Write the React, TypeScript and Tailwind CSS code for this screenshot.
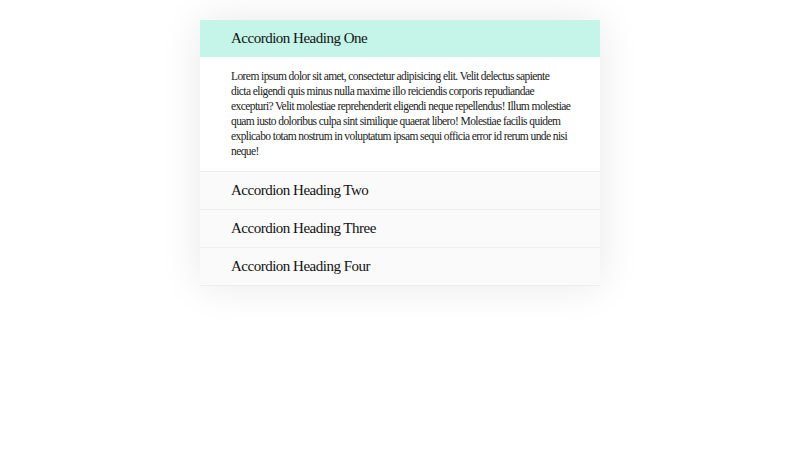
const items = [
  "Accordion Heading One",
  "Accordion Heading Two",
  "Accordion Heading Three",
  "Accordion Heading Four",
];

const bodyLines = [
  "Lorem ipsum dolor sit amet, consectetur adipisicing elit. Velit delectus sapiente",
  "dicta eligendi quis minus nulla maxime illo reiciendis corporis repudiandae",
  "excepturi? Velit molestiae reprehenderit eligendi neque repellendus! Illum molestiae",
  "quam iusto doloribus culpa sint similique quaerat libero! Molestiae facilis quidem",
  "explicabo totam nostrum in voluptatum ipsam sequi officia error id rerum unde nisi",
  "neque!",
];

export default function App() {
  return (
    <div
      className="w-[800px] h-[450px] bg-white pt-5"
      style={{ fontFamily: '"Liberation Serif", "Times New Roman", serif' }}
    >
      <div className="mx-auto w-[400px] bg-white shadow-[0_0_40px_rgba(0,0,0,0.09)]">
        {items.map((title, i) => (
          <div key={title}>
            {i === 0 ? (
              <>
                <div className="h-[37px] flex items-center px-[31px] bg-[#c4f5e8] text-[15px] tracking-[-0.5px] text-[#111]">
                  {title}
                </div>
                <div className="pl-[31px] pr-[20px] pt-3 pb-3 text-[11.5px] tracking-[-0.58px] leading-[15px] text-[#1a1a1a] border-b border-[#eeeeee]">
                  {bodyLines.map((line) => (
                    <div key={line} className="whitespace-nowrap">
                      {line}
                    </div>
                  ))}
                </div>
              </>
            ) : (
              <div className="h-[38px] flex items-center px-[31px] bg-[#fafafa] text-[15px] tracking-[-0.5px] text-[#111] border-b border-[#eeeeee]">
                {title}
              </div>
            )}
          </div>
        ))}
      </div>
    </div>
  );
}
